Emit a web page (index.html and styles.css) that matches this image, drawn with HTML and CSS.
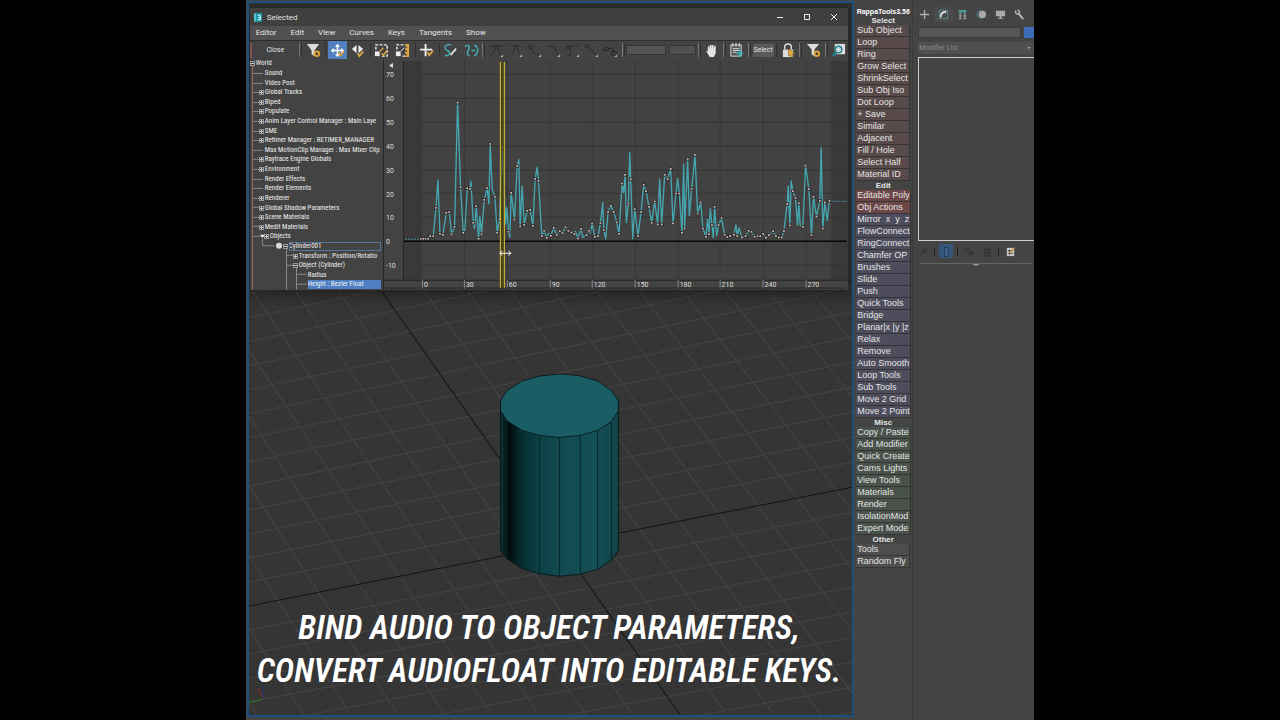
FILE: index.html
```html
<!DOCTYPE html>
<html lang="en">
<head>
<meta charset="utf-8">
<title>Selected - Curve Editor</title>
<link rel="stylesheet" href="styles.css">
</head>
<body>
<main class="app">
  <section class="viewport" aria-label="Perspective viewport">
    <svg class="scene" viewBox="249 3 603 712" preserveAspectRatio="xMidYMid slice" aria-hidden="true">
      <g class="grid-line">
        <path d="M-5 292L257 715M38 292L304 715M81 292L351 715M124 292L398 715M167 292L445 715M210 292L492 715M253 292L539 715M296 292L586 715M339 292L633 715M425 292L727 715M468 292L774 715M511 292L821 715M554 292L868 715M597 292L915 715M640 292L962 715M683 292L1009 715M726 292L1056 715M769 292L1103 715M812 292L1150 715"/>
        <path d="M248 294L852 162M248 318L852 187M248 342L852 212M248 366L852 237M248 390L852 262M248 414L852 287M248 438L852 312M248 462L852 337M248 486L852 362M248 510L852 387M248 534L852 412M248 558L852 437M248 582L852 462M248 630L852 512M248 654L852 537M248 678L852 562M248 702L852 587M248 726L852 612M248 750L852 637M248 774L852 662M248 798L852 687M248 822L852 712"/>
      </g>
      <path class="axis-line" d="M382 292L680 715M248 606L852 487"/>
      <g transform="translate(490 360) scale(.33333)">
        <defs>
          <linearGradient id="side">
            <stop offset="0" stop-color="#0c3436"/><stop offset=".04" stop-color="#071c1d"/>
            <stop offset=".07" stop-color="#030a0a"/><stop offset=".18" stop-color="#063033"/>
            <stop offset=".34" stop-color="#0d4247"/><stop offset=".55" stop-color="#124b51"/>
            <stop offset=".8" stop-color="#145056"/><stop offset="1" stop-color="#124348"/>
          </linearGradient>
        </defs>
        <path fill="url(#side)" stroke="#0a1c1d" stroke-width="3" d="M31 122V570L50 595L95 625L148 641L208 648L270 642L322 627L365 599L385 570V120Z"/>
        <path class="cyl-edge" d="M50 183V595M95 212V625M148 226V641M208 232V648M270 226V642M322 211V627M363 187V599"/>
        <path fill="#1a5d64" stroke="#071617" stroke-width="2.500" d="M31 122L50 93L95 63L148 48L208 42L268 47L322 63L362 91L384 121V153L363 185L322 211L270 226L208 232L148 226L95 211L50 182L31 152Z"/>
      </g>
      <path d="M249 702L263 699" stroke="#2c7a2c" fill="none"/>
      <path d="M263 699L258 688" stroke="#80302a" fill="none"/>
      <path d="M263 699V685" stroke="#29357a" fill="none"/>
    </svg>

    <div class="editor">
      <header class="titlebar">
        <svg class="logo" viewBox="0 0 10 10"><path fill="#1c94a8" d="M0 1l2-1h7v9l-2 1H0z"/><path fill="#5dc7d2" d="M0 1l2-1v9l-2 1z"/><path d="M4 2.500h3v5H4M4.500 5H7" stroke="#fff" fill="none"/></svg>
        <h1>Selected</h1>
        <button aria-label="Minimize"><svg viewBox="0 0 8 8"><path d="M1 4.500h6"/></svg></button>
        <button aria-label="Maximize"><svg viewBox="0 0 8 8"><path d="M1.500 1.500h5v5h-5z"/></svg></button>
        <button aria-label="Close window"><svg viewBox="0 0 8 8"><path d="M1 1l6 6M7 1l-6 6"/></svg></button>
      </header>
      <nav class="menu">
        <button>Editor</button><button>Edit</button><button>View</button><button>Curves</button><button>Keys</button><button>Tangents</button><button>Show</button>
      </nav>
      <div class="toolbar">
        <i class="grip"></i>
        <button class="close-btn">Close</button>
        <i class="sep"></i>
        <button class="tool" aria-label="Filters"><svg viewBox="0 0 16 16"><path fill="#ddd" d="M1 1h13L9 8v6l-3-2V8z"/><circle cx="11.500" cy="11.500" r="2.500" fill="none" stroke="#e0a83c" stroke-width="2"/></svg></button>
        <i class="sep thin"></i>
        <button class="tool active" aria-label="Move keys"><svg viewBox="0 0 16 16"><path d="M8 2v12M2 8h12M6 4l2-2 2 2M6 12l2 2 2-2M4 6L2 8l2 2M12 6l2 2-2 2" stroke="#fff" stroke-width="1.500" fill="none"/><path d="M9 10l2 3 4-4" stroke="#dba53f" stroke-width="2" fill="none"/></svg></button>
        <button class="tool" aria-label="Slide keys"><svg viewBox="0 0 16 16"><path fill="#eee" d="M7 2v9L2 6.500zM9 2v9l5-4.500z"/><path d="M8 11l2 3 4-5" stroke="#dba53f" stroke-width="2" fill="none"/></svg></button>
        <i class="sep thin"></i>
        <button class="tool" aria-label="Scale keys"><svg viewBox="0 0 16 16"><path d="M2 7V2h12v12H8" stroke="#eee" stroke-width="1.500" stroke-dasharray="3 1.500" fill="none"/><path fill="#eee" d="M1 9h5v5H1z"/><path d="M6 9l4-4M8 11l2 2 4-5" stroke="#dba53f" stroke-width="1.500" fill="none"/></svg></button>
        <button class="tool" aria-label="Scale values"><svg viewBox="0 0 16 16"><path d="M2 7V2h9M8 14h3" stroke="#eee" stroke-width="1.500" stroke-dasharray="3 1.500" fill="none"/><path fill="#eee" d="M1 9h5v5H1z"/><path d="M6 9l4-4" stroke="#eee"/><path fill="#dba53f" d="M11 1h4v14h-4v-2h2v-1h-2V9h2V8h-2V5h2V4h-2z"/></svg></button>
        <i class="sep thin"></i>
        <button class="tool" aria-label="Add keys"><svg viewBox="0 0 16 16"><path d="M7 1v13M1 7h13" stroke="#eee" stroke-width="2"/><path d="M9 10l2 3 4-5" stroke="#dba53f" stroke-width="2" fill="none"/></svg></button>
        <i class="sep thin"></i>
        <button class="tool" aria-label="Draw curves"><svg viewBox="0 0 16 16"><path d="M9 2C4 1 0 4 3 7c2 2 5 1 4 4-1 2-3 3-5 2" stroke="#43afb7" stroke-width="1.500" fill="none"/><path d="M8 13l6-7" stroke="#ddd" stroke-width="2"/></svg></button>
        <button class="tool" aria-label="Simplify curve"><svg viewBox="0 0 16 16"><path d="M1 4c3-3 6-1 4 3-2 3-2 6 1 7M11 2c5 3 5 8 0 12M8 8h4" stroke="#43afb7" stroke-width="1.500" fill="none"/></svg></button>
        <i class="sep"></i>
        <div class="tangents">
          <button class="tool" aria-label="Auto tangents" disabled><svg viewBox="0 0 16 16"><path d="M1 3h14M2 13C6 11 6 5 8 3c2 2 2 8 6 10"/><path class="corner" d="M15 12v3h-3z"/></svg></button>
          <button class="tool" aria-label="Spline tangents" disabled><svg viewBox="0 0 16 16"><path d="M3 3h10M3 13C7 10 6 5 8 3c3 2 2 6 5 10"/><path class="corner" d="M15 12v3h-3z"/></svg></button>
          <button class="tool" aria-label="Fast tangents" disabled><svg viewBox="0 0 16 16"><path d="M2 3h3v3H2zM5 5c1 6 4 7 8 8"/><path class="corner" d="M15 12v3h-3z"/></svg></button>
          <button class="tool" aria-label="Slow tangents" disabled><svg viewBox="0 0 16 16"><path d="M2 3c7 0 9 4 10 10"/><path class="corner" d="M15 12v3h-3z"/></svg></button>
          <button class="tool" aria-label="Stepped tangents" disabled><svg viewBox="0 0 16 16"><path d="M3 13h3V3h8M2 3h3v3H2z"/><path class="corner" d="M15 12v3h-3z"/></svg></button>
          <button class="tool" aria-label="Linear tangents" disabled><svg viewBox="0 0 16 16"><path d="M1 2h4v3H1zM5 5l8 8"/><path class="corner" d="M15 12v3h-3z"/></svg></button>
          <button class="tool" aria-label="Smooth tangents" disabled><svg viewBox="0 0 16 16"><path d="M1 5h5v3H1zM6 6h5v5M9 9h5v4H9z"/><path class="corner" d="M15 12v3h-3z"/></svg></button>
        </div>
        <i class="sep"></i>
        <div class="track"><span class="track-a"></span><span class="track-b"></span></div>
        <i class="sep"></i>
        <button class="tool" aria-label="Pan"><svg viewBox="0 0 16 16"><path fill="#e3e3e3" d="M2 8l2 1V4l1.500-.5L6 7V2h2v5l.5-5 1.800.3L10 7l1-4h1.500v8l-2 4H6z"/></svg></button>
        <i class="sep"></i>
        <button class="tool" aria-label="Edit notes"><svg viewBox="0 0 16 16"><path d="M2 2h11v12H2z" fill="#555" stroke="#ddd"/><path d="M4 0v4M7.500 0v4M11 0v4M4 6h7M4 8h7M4 10h4" stroke="#ddd"/><path d="M11.500 7v8M8 11h7" stroke="#38b0b8" stroke-width="2"/></svg></button>
        <i class="sep"></i>
        <button class="select-btn">Select</button>
        <i class="sep thin"></i>
        <button class="tool" aria-label="Lock selection"><svg viewBox="0 0 16 16"><path d="M4 7V4c0-4 7-4 7 0v3" fill="none" stroke="#ddd" stroke-width="1.500"/><path fill="#ddd" d="M2 7h11v8H2z"/><path fill="#e5a836" stroke="#664b1b" stroke-width=".5" d="M8 6l7 5-3 .5 1 3-2 1-1.500-3L8 14z"/></svg></button>
        <i class="sep"></i>
        <button class="tool" aria-label="Filter selected"><svg viewBox="0 0 16 16"><path fill="#ddd" d="M1 1h13L9 7v7l-3-2V7z"/><circle cx="11.500" cy="11.500" r="2.500" fill="none" stroke="#e0a83c" stroke-width="2"/></svg></button>
        <i class="sep"></i>
        <button class="tool" aria-label="Zoom region"><svg viewBox="0 0 16 16"><path fill="#ddd" d="M4 1h11v11H4z"/><circle cx="8" cy="7" r="3.500" fill="#c8dcde" stroke="#21818d" stroke-width="1.500"/><path d="M5.500 10L2 14" stroke="#21818d" stroke-width="2.500"/></svg></button>
      </div>

      <div class="editor-body">
        <div class="tree-wrap">
          <svg class="tree-lines" viewBox="250 59 131 231" preserveAspectRatio="none" aria-hidden="true">
            <path d="M252.500 66V290" stroke="#a06c55"/>
            <path stroke="#888" fill="none" d="M253 73.500h10M253 83.500h10M253 92.500h7M253 102.500h7M253 111.500h7M253 121.500h7M253 131.500h7M253 140.500h7M253 150.500h10M253 159.500h7M253 169.500h7M253 179.500h10M253 188.500h10M253 198.500h7M253 207.500h7M253 217.500h7M253 226.500h7M253 236.500h12M262.500 239v7h12M286.500 249v41M286.500 255.500h7M286.500 265.500h7M296.500 268v22M296.500 274.500h10M296.500 284.500h10"/>
            <path fill="#eee" d="M260 235h5l-2.500 3z"/><circle cx="279" cy="246" r="3" fill="#ddd"/>
          </svg>
          <ul class="tree">
            <li class="l0"><b class="minus"></b><span>World</span></li>
            <li class="l1"><span>Sound</span></li>
            <li class="l1"><span>Video Post</span></li>
            <li class="l1 node"><b></b><span>Global Tracks</span></li>
            <li class="l1 node"><b></b><span>Biped</span></li>
            <li class="l1 node"><b></b><span>Populate</span></li>
            <li class="l1 node"><b></b><span>Anim Layer Control Manager : Main Laye</span></li>
            <li class="l1 node"><b></b><span>SME</span></li>
            <li class="l1 node"><b></b><span>Retimer Manager : RETIMER_MANAGER</span></li>
            <li class="l1"><span>Max MotionClip Manager : Max Mixer Clip</span></li>
            <li class="l1 node"><b></b><span>Raytrace Engine Globals</span></li>
            <li class="l1 node"><b></b><span>Environment</span></li>
            <li class="l1"><span>Render Effects</span></li>
            <li class="l1"><span>Render Elements</span></li>
            <li class="l1 node"><b></b><span>Renderer</span></li>
            <li class="l1 node"><b></b><span>Global Shadow Parameters</span></li>
            <li class="l1 node"><b></b><span>Scene Materials</span></li>
            <li class="l1 node"><b></b><span>Medit Materials</span></li>
            <li class="l2 node"><b></b><span>Objects</span></li>
            <li class="l3 node"><b class="minus"></b><span class="boxed">Cylinder001</span></li>
            <li class="l4 node"><b></b><span>Transform : Position/Rotatio</span></li>
            <li class="l4 node"><b class="minus"></b><span>Object (Cylinder)</span></li>
            <li class="l5"><span>Radius</span></li>
            <li class="l5"><span class="picked">Height : Bezier Float</span></li>
          </ul>
        </div>
        <svg class="graph" viewBox="383 59 465 231" role="img" aria-label="Height curve">
          <defs>
            <marker id="key" markerUnits="userSpaceOnUse" markerWidth="12" markerHeight="12" refX="6" refY="6" viewBox="0 0 12 12"><path d="M2 2h8v8H2z" fill="#d2c2bc" stroke="#202020" stroke-width="2.500"/></marker>
          </defs>
          <path fill="#424242" d="M403 61H848V280H403z"/>
          <path fill="#393939" d="M403 61H421V280H403zM831 61H848V280H831z"/>
          <path d="M421 74.500H845M421 98.500H845M421 122.500H845M421 146.500H845M421 170.500H845M421 193.500H845M421 217.500H845M421 265.500H845" stroke="#353535"/>
          <path d="M463.500 61V280M506.500 61V280M549.500 61V280M591.500 61V280M634.500 61V280M677.500 61V280M719.500 61V280M762.500 61V280M805.500 61V280" stroke="#383838"/>
          <path d="M402.500 61V280M383 280.500H848" stroke="#222"/>
          <path d="M403 241.500H846" stroke="#060606" stroke-width="1.500"/>
          <path class="ruler" d="M421.500 280v9M463.500 280v9M506.500 280v9M549.500 280v9M591.500 280v9M634.500 280v9M677.500 280v9M719.500 280v9M762.500 280v9M805.500 280v9"/>
          <path d="M384 288.500H846" stroke="#222" stroke-width="2" stroke-dasharray="1 1"/>
          <path d="M404 239.500H421M832 201.500H846" stroke="#3e8e96" stroke-dasharray="2 1"/>
          <g transform="translate(384 56) scale(.33333)">
            <polyline class="curve" points="108,549 129,549 136,541 145,541 153,456 159,372 165,534 174,537 184,471 193,469 200,536 209,513 218,140 227,394 235,531 240,520 247,397 255,399 258,376 265,501 269,518 274,451 281,549 285,481 290,536 298,432 307,397 312,444 316,264 322,400 330,423 337,531 344,490 353,275 362,505 366,455 371,528 375,545 379,411 389,491 397,331 402,311 406,512 412,390 418,507 427,465 436,462 444,510 451,369 457,334 461,375 471,541 478,525 486,546 492,533 498,540 507,516 516,538 525,526 533,532 542,514 551,525 560,530 569,535 572,526 579,548 589,519 594,545 605,538 613,525 617,532 622,503 630,543 640,541 647,502 654,440 657,523 663,549 670,468 678,450"/>
            <polyline class="keys" marker-start="url(#key)" marker-mid="url(#key)" marker-end="url(#key)" points="108,549 115,549 122,549 129,549 136,541 145,541 153,456 165,534 174,537 184,471 193,469 200,536 209,513 218,140 227,394 235,531 247,397 255,399 265,501 274,451 281,549 290,536 298,432 307,397 316,264 330,423 337,531 344,490 353,275 371,528 379,411 389,491 397,331 406,512 418,507 427,465 436,462 444,510 451,369 461,375 471,541 478,525 486,546 498,540 507,516 516,538 525,526 533,532 542,514 551,525 560,530 569,535 579,548 589,519 605,538 613,525 622,503 630,543 640,541 647,502 657,523 670,468 678,450"/>
          </g>
          <g transform="translate(610 56) scale(.33333)">
            <polyline class="curve" points="0,450 9,468 18,500 25,534 34,383 39,410 43,357 47,500 53,443 57,290 60,370 66,549 72,460 82,541 91,468 99,387 106,406 115,453 123,501 132,437 141,506 147,370 153,506 162,357 171,370 180,339 187,503 196,413 201,368 206,413 214,531 219,325 222,518 231,309 236,480 243,399 253,297 261,473 270,440 277,518 286,543 291,490 295,535 299,458 304,508 308,545 312,453 318,540 324,508 333,486 342,537 350,544 359,541 370,537 376,507 380,541 385,516 394,545 405,541 414,525 423,528 432,543 441,541 449,541 458,534 466,546 475,538 488,526 496,541 505,545 514,545 520,526 530,444 533,390 538,509 542,375 547,406 555,427 561,508 565,442 569,508 577,513 585,329 595,400 603,538 609,423 618,482 628,435 632,275 637,518 643,440 650,494 657,435"/>
            <polyline class="keys" marker-start="url(#key)" marker-mid="url(#key)" marker-end="url(#key)" points="9,468 18,500 25,534 34,383 43,357 53,443 60,370 72,460 82,541 91,468 99,387 106,406 115,453 123,501 132,437 141,506 153,506 162,357 171,370 180,339 187,503 196,413 206,413 214,531 222,518 231,309 243,399 253,297 261,473 270,440 277,518 286,543 295,535 304,508 312,453 324,508 333,486 342,537 350,544 359,541 370,537 380,541 394,545 405,541 414,525 423,528 432,543 441,541 449,541 458,534 466,546 475,538 488,526 496,541 505,545 514,545 520,526 530,444 538,509 547,406 555,427 565,442 577,513 585,329 595,400 603,538 609,423 618,482 628,435 637,518 643,440 657,435"/>
          </g>
          <path fill="#4c4410" fill-opacity=".75" d="M500 62H504V288H500z"/>
          <path d="M499.500 62V288M503.500 62V288" stroke="#d9c136"/>
          <path d="M499 253.500h11M501.500 251l-2.500 2.500 2.500 2.500M507.500 251l2.500 2.500-2.500 2.500" stroke="#fff" fill="none"/>
          <path fill="#ddd" d="M388 65.500l4-2.500v5z"/>
          <g class="axis-text">
            <text x="385" y="77">70</text><text x="385" y="101">60</text><text x="385" y="125">50</text><text x="385" y="149">40</text><text x="385" y="173">30</text><text x="385" y="197">20</text><text x="385" y="220">10</text><text x="385" y="244">0</text><text x="385" y="268">-10</text>
            <text x="423" y="287">0</text><text x="465" y="287">30</text><text x="508" y="287">60</text><text x="551" y="287">90</text><text x="593" y="287">120</text><text x="636" y="287">150</text><text x="679" y="287">180</text><text x="721" y="287">210</text><text x="764" y="287">240</text><text x="807" y="287">270</text>
          </g>
        </svg>
      </div>
    </div>

    <p class="caption">BIND AUDIO TO OBJECT PARAMETERS,<br>CONVERT AUDIOFLOAT INTO EDITABLE KEYS.</p>
  </section>

  <aside class="rappa">
    <h2 class="brand">RappaTools3.56</h2>
    <h2>Select</h2>
    <div class="group red"><button>Sub Object</button><button>Loop</button><button>Ring</button><button>Grow Select</button><button>ShrinkSelect</button><button>Sub Obj Iso</button><button>Dot Loop</button><button>+ Save</button><button>Similar</button><button>Adjacent</button><button>Fill / Hole</button><button>Select Half</button><button>Material ID</button></div>
    <h2>Edit</h2>
    <div class="group crimson"><button>Editable Poly</button><button>Obj Actions</button></div>
    <div class="group blue"><button>Mirror&nbsp; x&nbsp; y&nbsp; z</button><button>FlowConnect</button><button>RingConnect</button><button>Chamfer OP</button><button>Brushes</button><button>Slide</button><button>Push</button><button>Quick Tools</button><button>Bridge</button><button>Planar|x |y |z</button><button>Relax</button><button>Remove</button><button>Auto Smooth</button><button>Loop Tools</button><button>Sub Tools</button><button>Move 2 Grid</button><button>Move 2 Point</button></div>
    <h2>Misc</h2>
    <div class="group green"><button>Copy / Paste</button><button>Add Modifier</button><button>Quick Create</button><button>Cams Lights</button><button>View Tools</button><button>Materials</button><button>Render</button><button>IsolationMod</button><button>Expert Mode</button></div>
    <h2>Other</h2>
    <div class="group grey"><button>Tools</button><button>Random Fly</button></div>
  </aside>

  <aside class="command">
    <div class="tabs">
      <button aria-label="Create"><svg viewBox="0 0 12 12"><path d="M6 1v10M1 6h10" stroke="#aaa" stroke-width="1.500"/></svg></button>
      <button aria-label="Modify" class="on"><svg viewBox="0 0 12 12"><path d="M1.500 1.500h9v9h-9z" stroke="#56a8b4" stroke-dasharray="2 1" fill="none"/><path d="M3 9c0-4 2-6 6-6" stroke="#ddd" stroke-width="2" fill="none"/></svg></button>
      <button aria-label="Hierarchy"><svg viewBox="0 0 12 12"><path fill="#4e9a9a" d="M2 1h8v3H2z"/><path d="M3.500 4v7M8.500 4v7M2 7.500h3M7 7.500h3M2 10.500h3M7 10.500h3" stroke="#999" stroke-width="1.500"/></svg></button>
      <button aria-label="Motion"><svg viewBox="0 0 12 12"><circle cx="5" cy="6" r="4" fill="none" stroke="#3e8a94"/><circle cx="7" cy="6" r="4" fill="#aaa"/></svg></button>
      <button aria-label="Display"><svg viewBox="0 0 12 12"><path fill="#aaa" d="M1 2h10v6H1zM5 8h2v2h2v1H3v-1h2z"/></svg></button>
      <button aria-label="Utilities"><svg viewBox="0 0 12 12"><path d="M5 5l5 6" stroke="#bbb" stroke-width="2"/><path d="M2 2c-1 3 1 4 3 3s1-3-1-4" stroke="#bbb" stroke-width="1.500" fill="none"/></svg></button>
    </div>
    <div class="name-row"><input type="text" aria-label="Object name"><button class="swatch" aria-label="Object color"></button></div>
    <div class="modifier"><select aria-label="Modifier"><option>Modifier List</option></select><i></i></div>
    <div class="stack"></div>
    <div class="stack-tools">
      <button aria-label="Pin stack"><svg viewBox="0 0 12 12"><path d="M2 10l4-4M5 4l4 4M6 5l3-3 1 2-3 3" stroke="#2d2d2d" fill="none"/></svg></button>
      <i></i>
      <button class="on" aria-label="Show end result"><svg viewBox="0 0 12 12"><path d="M4 1.500h4v10H4z" stroke="#20384f" fill="#41648a"/></svg></button>
      <i></i>
      <button aria-label="Make unique"><svg viewBox="0 0 12 12"><circle cx="4" cy="4" r="2" stroke="#2f2f2f" fill="none"/><circle cx="8" cy="8" r="2.500" fill="#333"/></svg></button>
      <button aria-label="Remove modifier"><svg viewBox="0 0 12 12"><path d="M3 4h6v7H3zM2 3.500h8M5 2h2M5 6v4M7 6v4" stroke="#303030" fill="none"/></svg></button>
      <i></i>
      <button aria-label="Configure sets"><svg viewBox="0 0 12 12"><path fill="#ccc" d="M2 2h8v9H2z"/><path d="M3 5h6M3 8h6M5 4v6" stroke="#444"/><path d="M5 8l5-6" stroke="#d99432" stroke-width="1.500"/></svg></button>
    </div>
    <div class="rollup"><i></i></div>
  </aside>
</main>
</body>
</html>
```

FILE: styles.css
```css
* { box-sizing: border-box; }
html, body { height: 100%; }
body {
  margin: 0;
  background: #000;
  color: #e4e4e4;
  font-family: "Liberation Sans", Arial, sans-serif;
  font-size: 8px;
}
button {
  margin: 0;
  padding: 0;
  border: 0;
  background: none;
  color: inherit;
  font: inherit;
}
svg { display: block; }

.app {
  display: grid;
  grid-template-columns: minmax(0, 1fr) 58px 122px;
  width: 61.6%;
  min-height: 100%;
  margin: 0 auto;
  background: #444;
}

/* Viewport */
.viewport {
  position: relative;
  display: flex;
  flex-direction: column;
  margin: 1px 0 3px 1px;
  padding: 5px 4px 23px 1px;
  border: 2px solid #1d507c;
  background: #353535;
  overflow: hidden;
}
.scene { position: absolute; inset: 0; width: 100%; height: 100%; }
.grid-line { fill: none; stroke: #454545; }
.axis-line { fill: none; stroke: #141414; }
.cyl-edge { fill: none; stroke: #062527; stroke-width: 3; }
.caption {
  position: relative;
  margin: auto 0 0;
  color: #fff;
  font: italic 600 33px/43px "Roboto Condensed", "Liberation Sans Narrow", sans-serif;
  text-align: center;
  white-space: nowrap;
}

/* Curve editor window */
.editor {
  position: relative;
  background: #434343;
  box-shadow: 0 2px 12px 4px rgba(0, 0, 0, .35);
  font-family: Roboto, "Open Sans", sans-serif;
}
.titlebar {
  display: flex;
  align-items: center;
  height: 18px;
  padding: 0 1px 0 4px;
  background: #3f3f3f;
}
.titlebar h1 { flex: 1; margin: 0; font-size: 8px; font-weight: 400; }
.logo { width: 9px; height: 9px; margin-right: 4px; }
.titlebar button { display: grid; place-items: center; width: 27px; height: 18px; }
.titlebar button svg { width: 8px; height: 8px; fill: none; stroke: #eee; }
.menu {
  display: flex;
  gap: 14px;
  height: 14px;
  padding-left: 6px;
  background: #505050;
  font-size: 8px;
  line-height: 14px;
}
.toolbar {
  display: flex;
  align-items: center;
  justify-content: space-between;
  height: 19px;
  border-top: 1px solid #2e2e2e;
}
.grip { width: 2px; height: 15px; background: #7e5550; }
.sep { width: 3px; height: 14px; border-left: 1px solid #777; border-right: 1px solid #2f2f2f; }
.sep.thin { width: 2px; border-left: 0; }
.tool { display: grid; place-items: center; width: 19px; height: 18px; }
.tool svg { width: 15px; height: 15px; }
.tool.active { background: #527fc0; }
.close-btn { width: 44px; font-size: 7px; }
.select-btn { width: 21px; height: 13px; background: #5a5a5a; font-size: 7px; }
.tangents { display: flex; }
.tangents svg { fill: none; stroke: #292929; stroke-width: 1; }
.tangents .corner { fill: #aaa; stroke: none; }
.track { display: flex; gap: 3px; width: 70px; height: 10px; }
.track-a { flex: 3; border: 1px solid #353535; background: #555; }
.track-b { flex: 2; border: 1px solid #353535; background: #505050; }

.editor-body { display: grid; grid-template-columns: 131px 2px minmax(0, 1fr); }
.tree-wrap { position: relative; overflow: hidden; }
.tree-lines { position: absolute; inset: 0; width: 100%; height: 100%; }
.tree {
  position: relative;
  display: grid;
  grid-auto-rows: minmax(0, 1fr);
  height: 100%;
  margin: 0;
  padding: 0;
  list-style: none;
  color: #eee;
  font-family: "Roboto Condensed", "Liberation Sans Narrow", sans-serif;
  font-size: 7px;
  line-height: 9px;
  white-space: nowrap;
}
.tree li { display: flex; align-items: center; gap: 1px; min-height: 0; }
.tree b {
  flex: none;
  width: 5px;
  height: 5px;
  border: 1px solid #999;
  background:
    linear-gradient(#ccc, #ccc) center / 3px 1px no-repeat,
    linear-gradient(#ccc, #ccc) center / 1px 3px no-repeat,
    #3a3a3a;
}
.tree b.minus { background: linear-gradient(#ccc, #ccc) center / 3px 1px no-repeat, #3a3a3a; }
.l0 { padding-left: 0; }
.l1 { padding-left: 15px; }
.l1.node { padding-left: 9px; }
.l2 { padding-left: 14px; }
.l3 { padding-left: 33px; }
.l4 { padding-left: 43px; }
.l5 { padding-left: 58px; }
.boxed { flex: 1; outline: 1px solid #55799c; outline-offset: -1px; }
.picked { flex: 1; background: #4f7fc3; }
.graph { grid-column: 3; width: 100%; height: auto; border-left: 1px solid #262626; }
.curve { fill: none; stroke: #46a6b0; stroke-width: 4; stroke-linejoin: round; }
.keys { fill: none; stroke: none; }
.ruler { stroke: #888; }
.axis-text { fill: #ddd; font-size: 7px; }

/* Script tool column */
.rappa { padding: 8px 2px 0 2px; }
.rappa h2 {
  margin: 0;
  font-size: 8px;
  font-weight: 700;
  line-height: 9px;
  text-align: center;
}
.rappa .brand { font-size: 7px; line-height: 8px; color: #fff; white-space: nowrap; }
.group { display: grid; grid-auto-rows: 12px; }
.group button {
  padding: 0 0 0 1px;
  border: solid #343434;
  border-width: 0 1px 1px 0;
  font-size: 9px;
  line-height: 11px;
  text-align: left;
  white-space: nowrap;
}
.red button { background: #584a4a; }
.crimson button { background: #6d4648; }
.blue button { background: #4d4d5d; }
.green button { background: #49524b; }
.grey button { background: #4d4d4d; }

/* Command panel */
.command { padding: 7px 0 0 5px; border-left: 1px solid #3a3a3a; overflow: hidden; }
.tabs { display: flex; height: 16px; margin-left: -3px; }
.tabs button { display: grid; place-items: center; width: 19px; height: 15px; }
.tabs svg { width: 11px; height: 11px; }
.tabs .on { background: #4a4a4a; }
.name-row { display: flex; gap: 3px; margin-top: 4px; }
.name-row input { flex: 1; min-width: 0; height: 11px; padding: 0; border: 1px solid #3a3a3a; background: #565656; color: #ddd; font-size: 8px; }
.swatch { width: 10px; height: 11px; background: #3d6cbb; }
.modifier { position: relative; margin-top: 4px; }
.modifier select {
  display: block;
  width: 100%;
  height: 12px;
  padding: 0 1px;
  border: 0;
  background: #4f4f4f;
  color: #8a8a8a;
  appearance: none;
  font: 7px Roboto, sans-serif;
}
.modifier i { position: absolute; right: 3px; top: 5px; border: 2px solid transparent; border-top-color: #999; }
.stack { height: 184px; margin-top: 3px; border: solid #ccc; border-width: 1px 0 1px 1px; background: #444; }
.stack-tools { display: flex; align-items: center; gap: 4px; height: 16px; margin: 2px 0 0 -2px; }
.stack-tools button { display: grid; place-items: center; width: 14px; height: 14px; }
.stack-tools svg { width: 11px; height: 11px; }
.stack-tools .on { background: #36577c; }
.stack-tools i { width: 1px; height: 9px; background: #222; }
.rollup { display: flex; justify-content: center; margin: 4px 2px 0; border-top: 1px solid #666; }
.rollup i { border: 4px solid transparent; border-top: 2px solid #999; border-bottom: 0; }
```
